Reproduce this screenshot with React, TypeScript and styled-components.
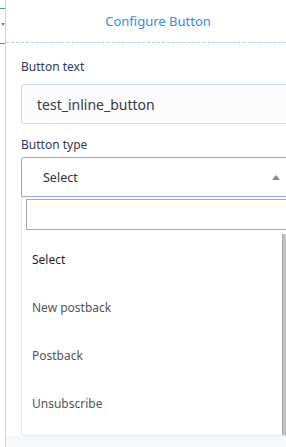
import React from "react";
import styled, { createGlobalStyle } from "styled-components";

const GlobalStyle = createGlobalStyle`
  html, body {
    margin: 0;
    padding: 0;
    background: #ffffff;
    overflow: hidden;
  }
  body {
    font-family: "Noto Sans", "Open Sans", sans-serif;
  }
`;

const Page = styled.div`
  display: flex;
  width: 286px;
  height: 447px;
  overflow: hidden;
`;

const Sidebar = styled.div`
  flex: 0 0 5px;
  display: flex;
  flex-direction: column;
  border-right: 1px solid #c4dcf1;
`;

const Tick = styled.div<{ $top: number }>`
  margin-top: ${(p) => p.$top}px;
  height: 1px;
  background: #3b8fe0;
`;

const Caret = styled.div`
  margin-top: 14px;
  margin-left: 1px;
  width: 0;
  height: 0;
  border-left: 2px solid transparent;
  border-right: 2px solid transparent;
  border-top: 3px solid #3b8fe0;
`;

const Main = styled.div`
  flex: 0 0 300px;
  display: flex;
  flex-direction: column;
  background: #f5f9fb;
`;

const Header = styled.div`
  height: 42px;
  display: flex;
  align-items: center;
  justify-content: center;
  padding-left: 4px;
  border-bottom: 1px dashed #a7ccee;
  background: #ffffff;
  color: #2d8fe8;
  font-size: 13px;
`;

const Body = styled.div`
  height: 393px;
  display: flex;
  flex-direction: column;
  padding: 16px 15px 0 15px;
  box-sizing: border-box;
  background: #ffffff;
`;

const Label = styled.div<{ $gap: number }>`
  font-size: 12px;
  color: #333a5a;
  line-height: 16px;
  margin-bottom: ${(p) => p.$gap}px;
`;

const TextInput = styled.div`
  height: 38px;
  display: flex;
  align-items: center;
  padding-left: 15px;
  border: 1px solid #cadff0;
  border-radius: 3px;
  background: #fcfcff;
  color: #3a3a3a;
  font-size: 14px;
  margin-bottom: 13px;
`;

const SelectBox = styled.div`
  height: 38px;
  display: flex;
  align-items: center;
  justify-content: space-between;
  padding: 0 10px 0 21px;
  border: 1px solid #98a3ef;
  border-radius: 3px 3px 0 0;
  color: #333;
  font-size: 12.5px;
`;

const UpArrow = styled.div`
  width: 0;
  height: 0;
  border-left: 4px solid transparent;
  border-right: 4px solid transparent;
  border-bottom: 5px solid #888;
`;

const Dropdown = styled.div`
  flex: 1;
  display: flex;
  flex-direction: column;
  border: 1px solid #e3e7ef;
  border-top: none;
  border-radius: 0 0 4px 4px;
  background: #ffffff;
`;

const Search = styled.div`
  height: 29px;
  margin: 2px 0 0 4px;
  border: 1px solid #aaaaaa;
`;

const ListRow = styled.div`
  flex: 1;
  display: flex;
  min-height: 0;
`;

const Options = styled.div`
  flex: 1;
  display: flex;
  flex-direction: column;
  padding-top: 5px;
`;

const Option = styled.div<{ $active?: boolean }>`
  height: 48px;
  display: flex;
  align-items: center;
  padding-left: 10px;
  font-size: 12px;
  color: ${(p) => (p.$active ? "#1f1f1f" : "#555555")};
`;

const Scrollbar = styled.div`
  flex: 0 0 7px;
  margin-top: 4px;
  background: #c3c3c3;
  border-left: 1px solid #a9a9a9;
`;

const options = ["Select", "New postback", "Postback", "Unsubscribe"];

export default function App() {
  return (
    <>
      <GlobalStyle />
      <Page>
        <Sidebar>
          <Tick $top={8} />
          <Caret />
          <Tick $top={17} />
        </Sidebar>
        <Main>
          <Header>Configure Button</Header>
          <Body>
            <Label $gap={9}>Button text</Label>
            <TextInput>test_inline_button</TextInput>
            <Label $gap={4}>Button type</Label>
            <SelectBox>
              <span>Select</span>
              <UpArrow />
            </SelectBox>
            <Dropdown>
              <Search />
              <ListRow>
                <Options>
                  {options.map((o, i) => (
                    <Option key={o} $active={i === 0}>
                      {o}
                    </Option>
                  ))}
                </Options>
                <Scrollbar />
              </ListRow>
            </Dropdown>
          </Body>
        </Main>
      </Page>
    </>
  );
}
